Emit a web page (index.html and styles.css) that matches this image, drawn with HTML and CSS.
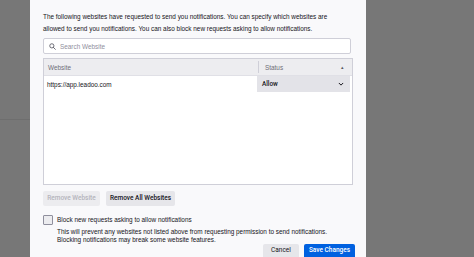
FILE: index.html
```html
<!DOCTYPE html>
<html>
<head>
<meta charset="utf-8">
<link rel="stylesheet" href="styles.css">
</head>
<body>
<div class="page">
  <div class="side-left"><div class="side-line"></div></div>
  <div class="dialog">
    <p class="intro">The following websites have requested to send you notifications. You can specify which websites are<br>allowed to send you notifications. You can also block new requests asking to allow notifications.</p>
    <div class="search">
      <svg class="search-icon" width="7" height="7" viewBox="0 0 16 16"><circle cx="6.5" cy="6.5" r="4.8" fill="none" stroke="#5b5b66" stroke-width="2"/><path d="M10 10l4.5 4.5" stroke="#5b5b66" stroke-width="2" stroke-linecap="round"/></svg>
      <span class="search-ph">Search Website</span>
    </div>
    <div class="table">
      <div class="thead">
        <div class="th th-site">Website</div>
        <div class="th th-status">Status<span class="sort">&#9652;</span></div>
      </div>
      <div class="row">
        <div class="cell-site">https://app.leadoo.com</div>
        <div class="cell-status">Allow
          <svg width="6" height="6" viewBox="0 0 16 16"><path d="M3 6l5 5 5-5" fill="none" stroke="#15141a" stroke-width="2.6" stroke-linecap="round" stroke-linejoin="round"/></svg>
        </div>
      </div>
    </div>
    <div class="actions">
      <button class="btn disabled">Remove Website</button>
      <button class="btn">Remove All Websites</button>
    </div>
    <div class="block">
      <span class="checkbox"></span>
      <div class="block-text">
        <div class="block-label">Block new requests asking to allow notifications</div>
        <div class="block-desc">This will prevent any websites not listed above from requesting permission to send notifications.<br>Blocking notifications may break some website features.</div>
      </div>
    </div>
    <div class="footer">
      <button class="btn">Cancel</button>
      <button class="btn primary">Save Changes</button>
    </div>
  </div>
  <div class="side-right"></div>
</div>
</body>
</html>
```
FILE: styles.css
```css
* { box-sizing: border-box; }
html, body { margin: 0; padding: 0; height: 100%; }
body {
  font-family: "Liberation Sans", Arial, sans-serif;
  font-size: 6.4px;
  color: #15141a;
  background: #767676;
  overflow: hidden;
}
.page {
  display: flex;
  height: 257px;
}
.side-left {
  width: 30px;
  background: #777777;
  padding-top: 119px;
}
.side-line {
  height: 1px;
  background: #6e6e6e;
}
.side-right {
  flex: 1;
  background: #777777;
}
.dialog {
  width: 336px;
  height: 257px;
  overflow: hidden;
  background: #f9f9fb;
  padding: 11px 14px 0 13px;
  display: flex;
  flex-direction: column;
}
.intro {
  margin: 0;
  line-height: 12px;
  white-space: nowrap;
}
.search {
  margin-top: 3px;
  height: 16px;
  width: 308px;
  flex: none;
  background: #fff;
  border: 1px solid #cfcfd8;
  border-radius: 2px;
  display: flex;
  align-items: center;
  padding-left: 5px;
  gap: 4px;
}
.search-icon { display: block; }
.search-ph { color: #8f8f9d; }
.table {
  margin-top: 4px;
  height: 127px;
  flex: none;
  width: 310px;
  background: #fff;
  border: 1px solid #cfcfd8;
}
.thead {
  display: flex;
  height: 17px;
  background: #ededf0;
  border-bottom: 1px solid #e0e0e6;
}
.th {
  display: flex;
  align-items: center;
  color: #6e6e78;
}
.th-site { width: 214px; padding-left: 4px; }
.th-status {
  flex: 1;
  padding-left: 6px;
  padding-right: 8px;
  border-left: 1px solid #cfcfd8;
  justify-content: space-between;
  margin: 2px 0;
}
.sort { font-size: 5px; color: #5b5b66; }
.row {
  display: flex;
  height: 16px;
}
.cell-site {
  width: 213px;
  padding-left: 3px;
  display: flex;
  align-items: center;
}
.cell-status {
  width: 93px;
  background: #e3e3e8;
  display: flex;
  align-items: center;
  justify-content: space-between;
  padding: 0 6px 0 5px;
  font-family: Roboto, "Liberation Sans", sans-serif;
  font-weight: 500;
}
.cell-status svg { display: block; }
.actions {
  margin-top: 6px;
  display: flex;
  gap: 6px;
}
.btn {
  font-family: Roboto, "Liberation Sans", sans-serif;
  font-size: 6.5px;
  font-weight: 500;
  white-space: nowrap;
  border: none;
  border-radius: 2px;
  background: #e6e6ea;
  color: #15141a;
  height: 15px;
  padding: 0 2px;
  line-height: 15px;
  text-align: center;
}
.btn.disabled { color: #b4b4bc; background: #ececef; width: 57px; }
.actions .btn:last-child { width: 69px; }
.block {
  margin-top: 8px;
  display: flex;
  gap: 4px;
}
.checkbox {
  width: 10px;
  height: 10px;
  margin-top: 1px;
  border: 1px solid #8f8f9d;
  border-radius: 1px;
  background: #ececef;
  flex: none;
}
.block-label { line-height: 11px; }
.block-desc { margin-top: 3px; line-height: 7.5px; color: #15141a; white-space: nowrap; }
.footer {
  margin-top: auto;
  display: flex;
  justify-content: flex-end;
  gap: 5px;
  margin-right: -3px;
}
.footer .btn { height: 13px; line-height: 13px; border-radius: 2px 2px 0 0; }
.footer .btn:first-child { width: 36px; font-weight: 400; }
.btn.primary { background: #0061e0; color: #fff; width: 51px; }
```
